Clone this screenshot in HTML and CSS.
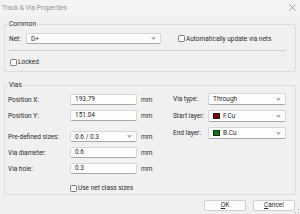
FILE: index.html
```html
<!DOCTYPE html>
<html>
<head>
<meta charset="utf-8">
<link rel="stylesheet" href="styles.css">
</head>
<body>
<div class="dialog">
  <div class="titlebar">
    <span class="title">Track &amp; Via Properties</span>
    <svg class="close" width="7" height="7" viewBox="0 0 7 7"><path d="M0.5 0.5 L6.5 6.5 M6.5 0.5 L0.5 6.5" stroke="#8a8a8a" stroke-width="0.8" fill="none"/></svg>
  </div>

  <fieldset class="group common">
    <legend>Common</legend>
    <div class="netrow">
      <span class="netlabel">Net:</span>
      <div class="combo net"><span>D+</span><span class="chev"></span></div>
      <label class="check auto"><span class="box"></span>Automatically update via nets</label>
    </div>
    <div class="sep"></div>
    <label class="check locked"><span class="box"></span>Locked</label>
  </fieldset>

  <fieldset class="group vias">
    <legend>Vias</legend>
    <div class="viabody">
      <div class="leftcol">
        <span class="lbl">Position X:</span><div class="input">193.79</div><span class="unit">mm</span>
        <span class="lbl">Position Y:</span><div class="input">151.04</div><span class="unit">mm</span>
        <span class="lbl gapabove">Pre-defined sizes:</span><div class="combo gapabove"><span>0.6 / 0.3</span><span class="chev"></span></div><span class="unit gapabove">mm</span>
        <span class="lbl">Via diameter:</span><div class="input">0.6</div><span class="unit">mm</span>
        <span class="lbl">Via hole:</span><div class="input">0.3</div><span class="unit">mm</span>
        <span></span><label class="check netclass"><span class="box"></span>Use net class sizes</label>
      </div>
      <div class="rightcol">
        <span class="lbl">Via type:</span><div class="combo wide"><span>Through</span><span class="chev"></span></div>
        <span class="lbl">Start layer:</span><div class="combo wide"><span class="swatch fcu"></span><span>F.Cu</span><span class="chev"></span></div>
        <span class="lbl">End layer:</span><div class="combo wide"><span class="swatch bcu"></span><span>B.Cu</span><span class="chev"></span></div>
      </div>
    </div>
  </fieldset>

  <div class="buttons">
    <div class="btn"><u>O</u>K</div>
    <div class="btn"><u>C</u>ancel</div>
  </div>
  <div class="grip">
    <svg width="4" height="4" viewBox="0 0 4 4"><rect x="3" y="0" width="1" height="1" fill="#b0b0b0"/><rect x="3" y="3" width="1" height="1" fill="#b0b0b0"/><rect x="0" y="3" width="1" height="1" fill="#b0b0b0"/></svg>
  </div>
</div>
</body>
</html>
```

FILE: styles.css
```css
* { box-sizing: border-box; }
html, body { margin: 0; padding: 0; }
body {
  width: 300px;
  height: 214px;
  background: #f0f0f0;
  font-family: Roboto, "Noto Sans", sans-serif;
  font-size: 6.5px;
  color: #2a2a2a;
  overflow: hidden;
  white-space: nowrap;
}
.dialog { position: relative; width: 300px; height: 214px; }
.titlebar {
  height: 16px;
  display: flex;
  align-items: center;
  justify-content: space-between;
  padding: 0 4px 0 2px;
  background: #f3f3f3;
}
.title { color: #959595; font-size: 6.6px; }
.close { margin-top: -2px; }

.group {
  margin: 0 4px;
  border: 1px solid #dcdcdc;
  border-radius: 2px;
  padding: 0 3px;
  min-width: 0;
}
.group legend {
  padding: 0 1px;
  margin-left: 0;
  line-height: 9px;
  font-size: 6.6px;
}
.common { margin-top: 4px; padding-bottom: 5px; }

.netrow { display: flex; align-items: center; margin-top: 4px; }
.netlabel { width: 18px; padding-left: 1px; }
.combo {
  height: 11px;
  background: #fdfdfd;
  border: 1px solid #d6d6d6;
  border-bottom-color: #a8a8a8;
  border-radius: 2px;
  display: flex;
  align-items: center;
  padding-left: 4px;
  gap: 3px;
}
.combo .chev {
  margin-left: auto;
  width: 3px; height: 3px;
  border-right: 0.7px solid #8a8a8a;
  border-bottom: 0.7px solid #8a8a8a;
  transform: rotate(45deg);
  margin-right: 5px;
  margin-top: -2px;
}
.combo.net { width: 135px; }
.check { display: flex; align-items: center; gap: 1px; }
.check .box {
  width: 7px; height: 7px;
  border: 0.8px solid #7a7a7a;
  border-radius: 1.5px;
  background: #f7f7f7;
}
.auto { margin-left: 17px; }
.sep { height: 1px; background: #cfcfcf; margin: 6px 6px 0 1px; }
.locked { margin-top: 7px; padding-left: 2px; }

.vias { margin-top: 9px; padding-bottom: 4px; height: 114px; }
.viabody { display: flex; }
.leftcol {
  width: 165px;
  display: grid;
  grid-template-columns: 58px 67px auto;
  column-gap: 4px;
  row-gap: 5px;
  align-items: center;
  margin-top: 4px;
  align-content: start;
}
.leftcol .gapabove { margin-top: 5px; }
.input {
  height: 11px;
  background: #fdfdfd;
  border: 1px solid #d6d6d6;
  border-bottom-color: #a8a8a8;
  border-radius: 2px;
  padding-left: 4px;
  line-height: 9px;
}
.leftcol .combo { width: 67px; }
.netclass { margin-top: 5px; grid-column: 2 / 4; }
.rightcol {
  display: grid;
  grid-template-columns: 35px 78px;
  row-gap: 5px;
  align-items: center;
  margin-top: 3px;
  align-content: start;
}
.combo.wide { width: 78px; height: 12px; }
.swatch { width: 7px; height: 6px; border: 0.7px solid #222; margin-right: 0; }
.fcu { background: #840000; }
.bcu { background: #008400; }

.buttons {
  display: flex;
  justify-content: flex-end;
  gap: 7px;
  padding-right: 5px;
  margin-top: 5px;
}
.btn {
  width: 42px;
  height: 11px;
  background: #fdfdfd;
  border: 1px solid #d0d0d0;
  border-radius: 2px;
  text-align: center;
  line-height: 9px;
}
.grip { position: absolute; right: 1px; bottom: 1px; line-height: 0; }
```
